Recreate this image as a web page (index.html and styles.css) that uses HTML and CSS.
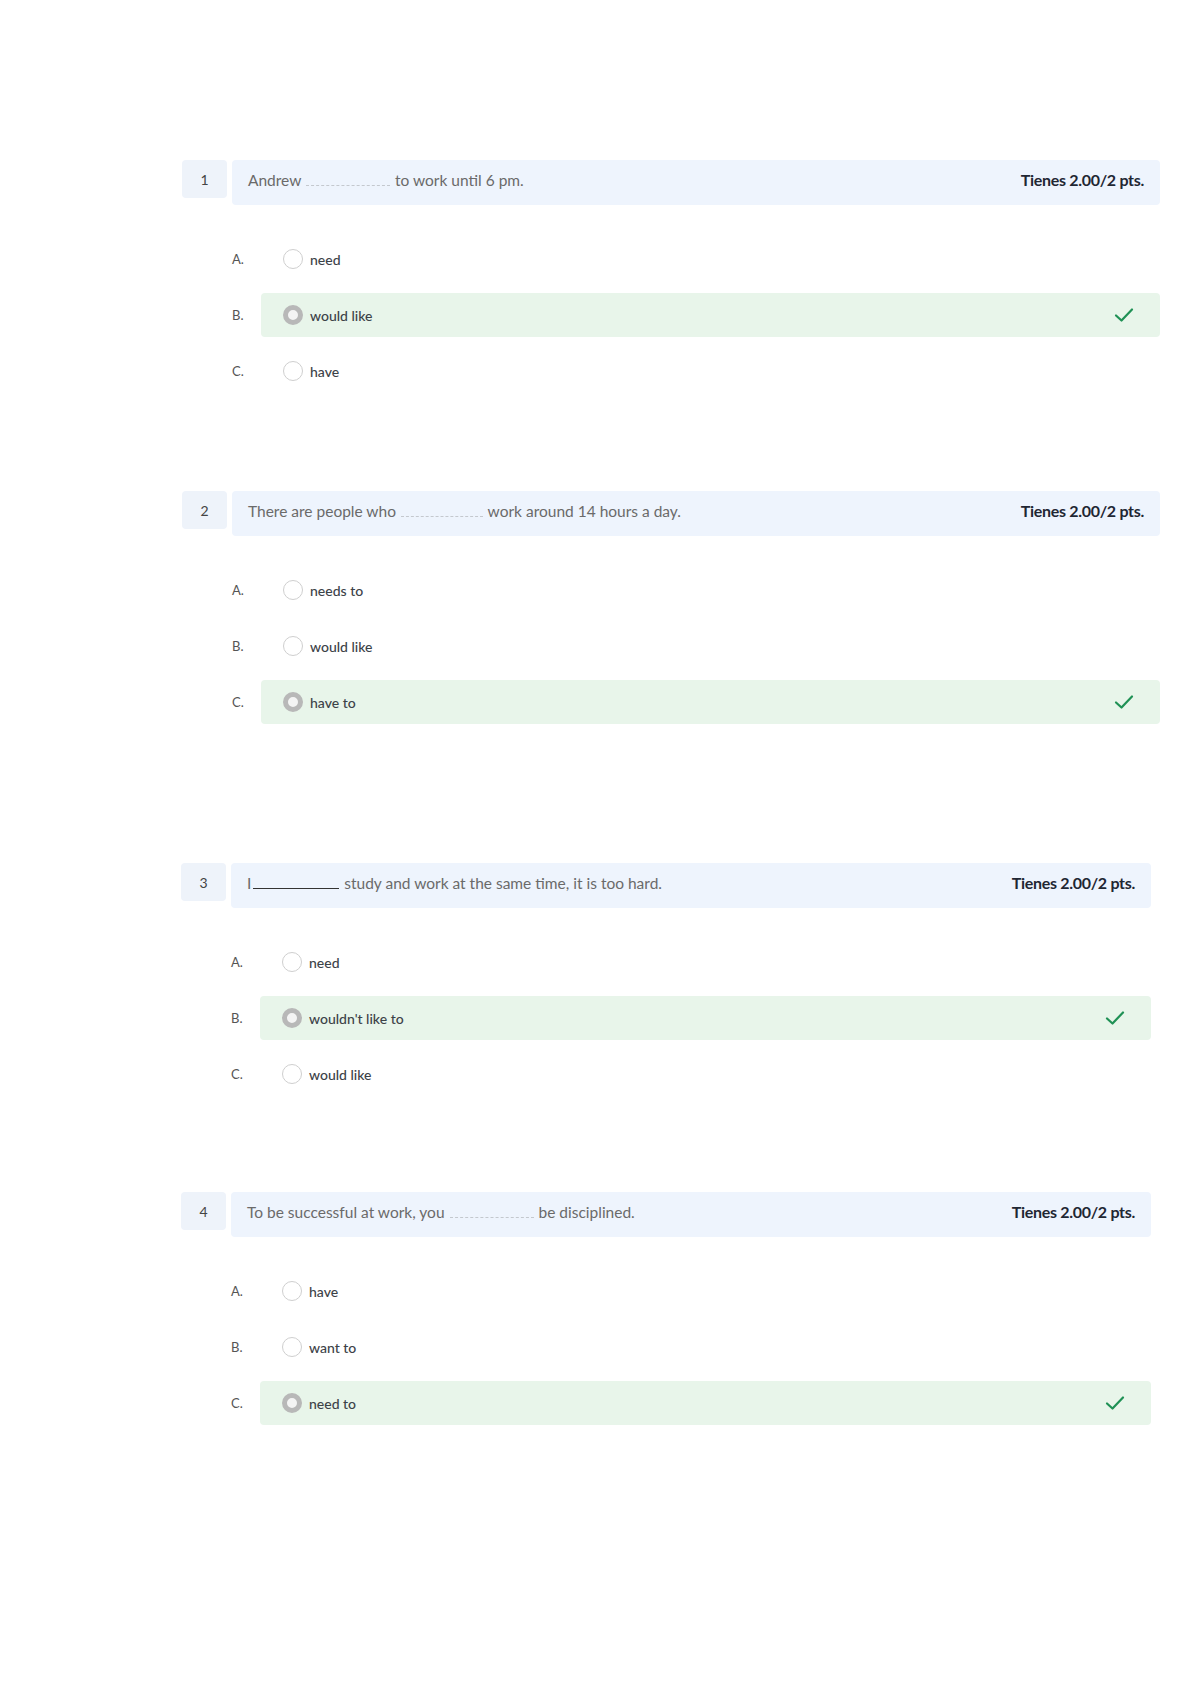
FILE: index.html
```html
<!DOCTYPE html>
<html lang="es">
<head>
<meta charset="utf-8">
<title>Quiz</title>
<link rel="stylesheet" href="styles.css">
</head>
<body>
<main class="page">

  <section class="question q1">
    <div class="q-head">
      <div class="q-num">1</div>
      <div class="q-box">
        <p class="q-text">Andrew <span class="blank"></span> to work until 6 pm.</p>
        <span class="q-score">Tienes 2.00/2 pts.</span>
      </div>
    </div>
    <ul class="options">
      <li class="opt"><span class="letter">A.</span><div class="opt-box"><span class="radio"></span><span class="opt-text">need</span></div></li>
      <li class="opt"><span class="letter">B.</span><div class="opt-box correct"><span class="radio checked"></span><span class="opt-text">would like</span><svg class="check" viewBox="0 0 20 16" width="20" height="16"><path d="M2 8.5 L7.5 13.5 L18 2.5" fill="none" stroke="#1f9155" stroke-width="2.2" stroke-linecap="round" stroke-linejoin="round"/></svg></div></li>
      <li class="opt"><span class="letter">C.</span><div class="opt-box"><span class="radio"></span><span class="opt-text">have</span></div></li>
    </ul>
  </section>

  <section class="question q2">
    <div class="q-head">
      <div class="q-num">2</div>
      <div class="q-box">
        <p class="q-text">There are people who <span class="blank"></span> work around 14 hours a day.</p>
        <span class="q-score">Tienes 2.00/2 pts.</span>
      </div>
    </div>
    <ul class="options">
      <li class="opt"><span class="letter">A.</span><div class="opt-box"><span class="radio"></span><span class="opt-text">needs to</span></div></li>
      <li class="opt"><span class="letter">B.</span><div class="opt-box"><span class="radio"></span><span class="opt-text">would like</span></div></li>
      <li class="opt"><span class="letter">C.</span><div class="opt-box correct"><span class="radio checked"></span><span class="opt-text">have to</span><svg class="check" viewBox="0 0 20 16" width="20" height="16"><path d="M2 8.5 L7.5 13.5 L18 2.5" fill="none" stroke="#1f9155" stroke-width="2.2" stroke-linecap="round" stroke-linejoin="round"/></svg></div></li>
    </ul>
  </section>

  <section class="question q3 shifted">
    <div class="q-head">
      <div class="q-num">3</div>
      <div class="q-box">
        <p class="q-text">I <span class="blank solid"></span> study and work at the same time, it is too hard.</p>
        <span class="q-score">Tienes 2.00/2 pts.</span>
      </div>
    </div>
    <ul class="options">
      <li class="opt"><span class="letter">A.</span><div class="opt-box"><span class="radio"></span><span class="opt-text">need</span></div></li>
      <li class="opt"><span class="letter">B.</span><div class="opt-box correct"><span class="radio checked"></span><span class="opt-text">wouldn't like to</span><svg class="check" viewBox="0 0 20 16" width="20" height="16"><path d="M2 8.5 L7.5 13.5 L18 2.5" fill="none" stroke="#1f9155" stroke-width="2.2" stroke-linecap="round" stroke-linejoin="round"/></svg></div></li>
      <li class="opt"><span class="letter">C.</span><div class="opt-box"><span class="radio"></span><span class="opt-text">would like</span></div></li>
    </ul>
  </section>

  <section class="question q4 shifted">
    <div class="q-head">
      <div class="q-num">4</div>
      <div class="q-box">
        <p class="q-text">To be successful at work, you <span class="blank"></span> be disciplined.</p>
        <span class="q-score">Tienes 2.00/2 pts.</span>
      </div>
    </div>
    <ul class="options">
      <li class="opt"><span class="letter">A.</span><div class="opt-box"><span class="radio"></span><span class="opt-text">have</span></div></li>
      <li class="opt"><span class="letter">B.</span><div class="opt-box"><span class="radio"></span><span class="opt-text">want to</span></div></li>
      <li class="opt"><span class="letter">C.</span><div class="opt-box correct"><span class="radio checked"></span><span class="opt-text">need to</span><svg class="check" viewBox="0 0 20 16" width="20" height="16"><path d="M2 8.5 L7.5 13.5 L18 2.5" fill="none" stroke="#1f9155" stroke-width="2.2" stroke-linecap="round" stroke-linejoin="round"/></svg></div></li>
    </ul>
  </section>

</main>
</body>
</html>
```

FILE: styles.css
```css
* { box-sizing: border-box; }

html, body {
  margin: 0;
  padding: 0;
  background: #ffffff;
}

body {
  font-family: Lato, "Open Sans", "Liberation Sans", sans-serif;
  color: #333;
}

.page {
  width: 1200px;
  padding: 160px 0 0 182px;
}

.question {
  width: 978px;
}

.q2 { margin-top: 98px; }
.q3 { margin-top: 139px; }
.q4 { margin-top: 96px; }

.shifted {
  margin-left: -1px;
  width: 970px;
}

.q-head {
  display: flex;
  align-items: flex-start;
  gap: 5px;
}

.q-num {
  width: 45px;
  height: 38px;
  flex: none;
  background: #eef3fa;
  border-radius: 4px;
  display: flex;
  align-items: center;
  justify-content: center;
  font-size: 14px;
  color: #444;
}

.q-box {
  flex: 1;
  height: 45px;
  background: #eef4fd;
  border-radius: 4px;
  display: flex;
  align-items: center;
  justify-content: space-between;
  padding: 0 16px 6px 16px;
}

.q-text {
  margin: 0;
  font-size: 15.5px;
  color: #6a6a6a;
}

.blank {
  display: inline-block;
  width: 84px;
  height: 1px;
  border-bottom: 1px dashed #c4c8ce;
  vertical-align: baseline;
  margin: 0 1px;
}

.q2 .blank { width: 82px; }

.blank.solid {
  border-bottom: 1px solid #333;
  width: 86px;
  margin-left: -2px;
}

.q-score {
  font-size: 16px;
  font-weight: 700;
  color: #1f2733;
  letter-spacing: -0.3px;
}

.options {
  list-style: none;
  margin: 32px 0 0 50px;
  padding: 0;
  display: flex;
  flex-direction: column;
  gap: 12px;
}

.opt {
  display: flex;
  align-items: center;
}

.letter {
  width: 29px;
  flex: none;
  font-size: 13px;
  color: #555;
}

.opt-box {
  flex: 1;
  height: 44px;
  display: flex;
  align-items: center;
  gap: 7px;
  padding: 0 26px 0 22px;
  border-radius: 4px;
}

.opt-box.correct {
  background: #e8f5ea;
}

.radio {
  width: 20px;
  height: 20px;
  flex: none;
  border-radius: 50%;
  border: 1px solid #cfcfcf;
  background: #fff;
}

.radio.checked {
  border: 5px solid #b8b8b8;
  background: #f4f4f4;
}

.opt-text {
  font-size: 14px;
  color: #3c4248;
  font-weight: 500;
}

.check {
  margin-left: auto;
}
```
